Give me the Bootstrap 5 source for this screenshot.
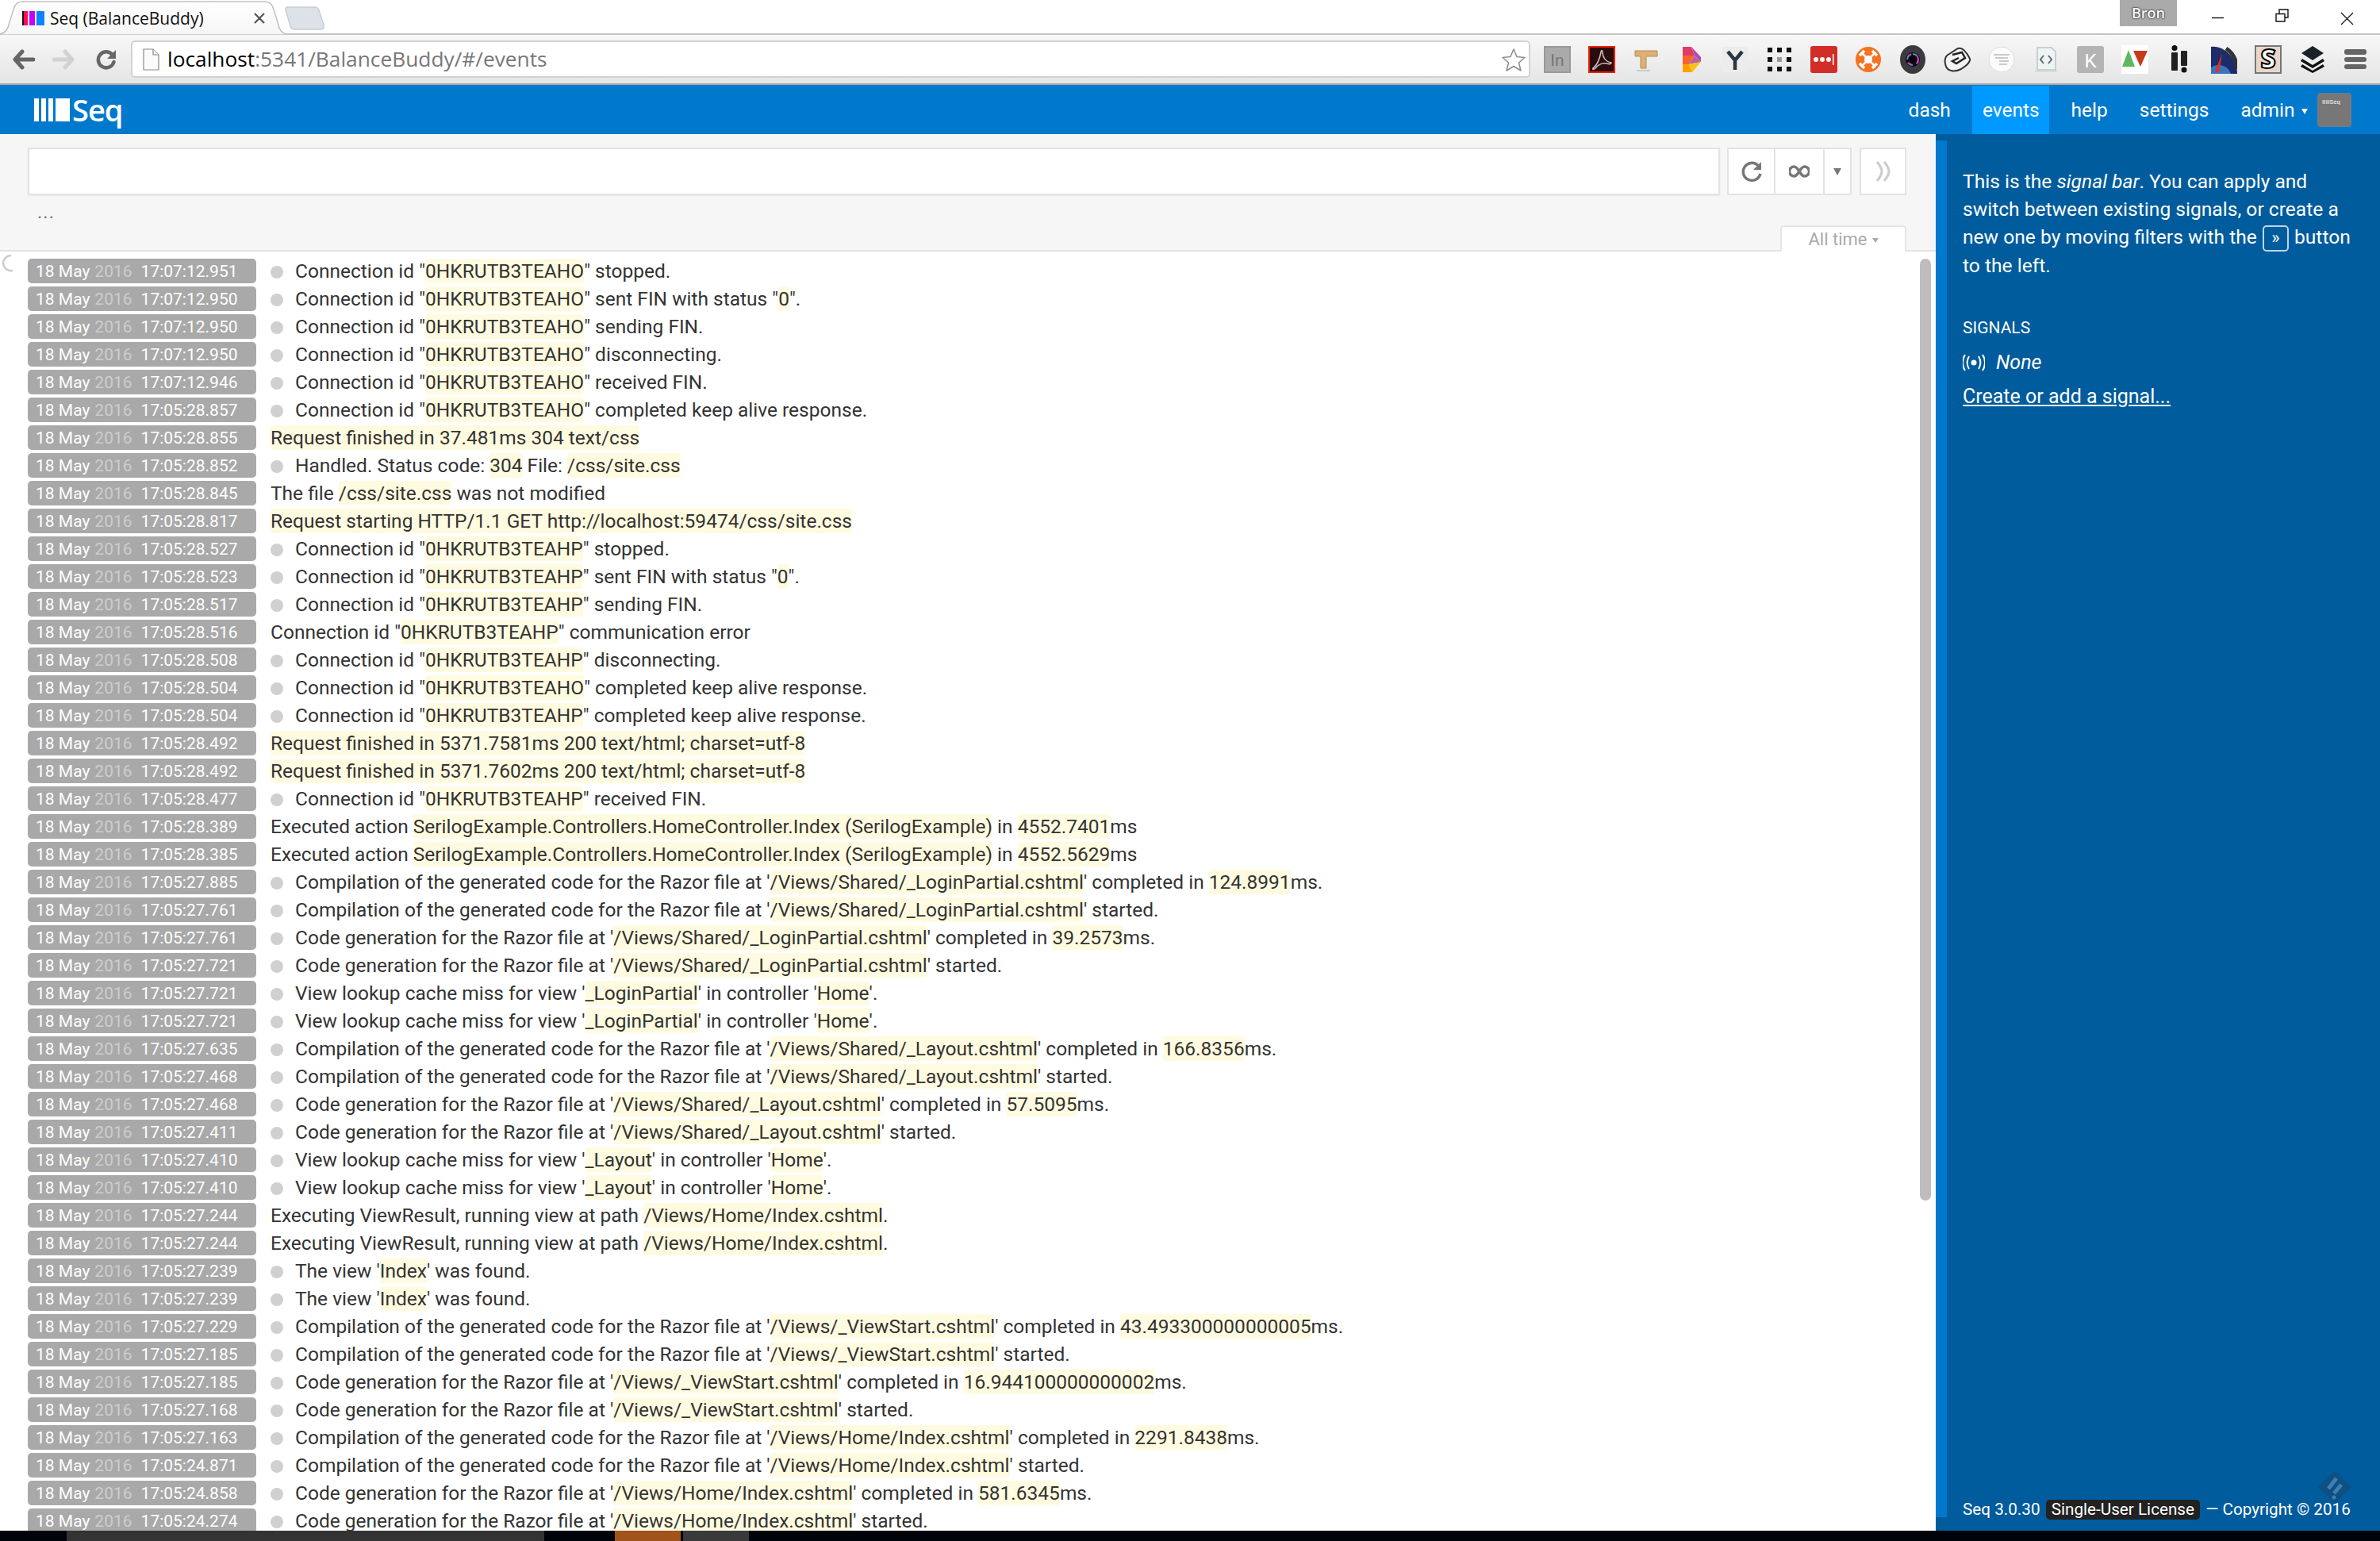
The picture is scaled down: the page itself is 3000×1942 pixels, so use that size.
<!DOCTYPE html>
<html lang="en">
<head>
<meta charset="utf-8">
<title>Seq (BalanceBuddy)</title>
<link href="https://cdn.jsdelivr.net/npm/bootstrap@5.3.0/dist/css/bootstrap.min.css" rel="stylesheet">
<style>
html,body{height:100%;margin:0;overflow:hidden;background:#fff;font-family:Roboto,"Liberation Sans",sans-serif;}
.page-shell{height:1942px;width:3000px;}
/* browser chrome */
.tab-strip{height:44px;background:#fff;flex:none;}
.strip-line{flex:1;height:2px;background:#c4c4c4;align-self:flex-end;}
.win-tab{width:362px;height:44px;position:relative;flex:none;font-family:"Open Sans","Noto Sans",sans-serif;font-size:21px;color:#111;}
.win-tab svg.tabshape{position:absolute;left:0;top:0;}
.tab-fav{position:absolute;left:28px;top:14px;}
.tab-title{position:absolute;left:63px;top:8px;line-height:30px;white-space:nowrap;}
.tab-close{position:absolute;left:320px;top:16px;}
.tab-new{width:56px;height:44px;flex:none;margin-left:-5px;}
.strip-fill{flex:1;display:flex;flex-direction:column;height:44px;}
.strip-top{height:42px;display:flex;justify-content:flex-end;}
.bron{width:72px;height:33px;background:#aaa;color:#fff;font-family:"Open Sans",sans-serif;font-size:18px;font-weight:600;text-align:center;line-height:32px;text-shadow:0 0 2px #222,0 0 2px #222;}
.win-btns{width:256px;padding-left:44px;}
.url-bar{height:63px;background:linear-gradient(#f7f7f7,#e5e5e5);border-bottom:2px solid #aaa;flex:none;padding-left:16px;}
.nav-arrows{width:149px;gap:22px;}
.omni{width:1764px;height:47px;background:#fff;border:2px solid #d2d2d2;border-radius:5px;padding-left:13px;font-family:"Open Sans","Noto Sans",sans-serif;font-size:26.3px;color:#777;}
.omni b{font-weight:400;color:#000;}
.omni-url{margin-left:10px;flex:1;white-space:nowrap;}
.omni-star{margin-right:3px;}
.ext-row{gap:22px;margin-left:17px;}
.ext-row svg{flex:none;display:block;}
/* navbar */
.seq-nav{height:62px;background:#0079cc;flex:none;padding:0 36px 0 43px !important;flex-wrap:nowrap !important;}
.seq-brand{display:flex;align-items:center;gap:2px;color:#fff;padding:0;margin:0;font-family:"Open Sans",sans-serif;font-weight:600;font-size:38px;line-height:62px;letter-spacing:-1px;}
.seq-brand:hover{color:#fff;}
.seq-links{gap:15px;align-items:stretch;}
.seq-links .nav-link{color:#fff;font-size:24.5px;height:61px;line-height:61px;padding:0 12.5px;}
.seq-links .nav-link.active,.seq-links .nav-link.active:hover{color:#fff;background:#0099ff;}
.seq-links .nav-link:hover{color:#fff;}
.admin-caret{display:inline-block;width:0;height:0;border-left:4px solid transparent;border-right:4px solid transparent;border-top:7px solid #fff;margin-left:8px;vertical-align:middle;}
.seq-avatar{width:43px;height:43px;flex:none;background:#777;border:1px solid #6a7e8f;border-radius:4px;color:#ddd;font-size:8px;font-weight:700;line-height:1;padding:7px 0 0 5px;white-space:nowrap;overflow:hidden;}
/* app */
.app-area{height:1760px;flex:none;}
.events-pane{width:2440px;flex:none;position:relative;overflow:hidden;}
.query-head{height:148px;background:#f6f6f6;border-bottom:2px solid #e2e2e2;padding:17px 37px 0 35px;position:relative;flex:none;}
.filter-input{height:60px;width:2133px;border-radius:0;border:2px solid #e3e3e3;background:#fff;box-shadow:0 1px 2px rgba(0,0,0,.06);flex:none;}
.tool-grp{margin-left:9px;height:60px;flex:none;}
.tool-btn{background:#fff;border:2px solid #e3e3e3;border-radius:0 !important;padding:0;display:flex;align-items:center;justify-content:center;height:60px;}
.tool-btn + .tool-btn{margin-left:-2px !important;}
.go-btn{margin-left:10px;width:59px;flex:none;}
.ellip{color:#777;font-size:24px;line-height:1;margin-top:9px;padding-left:12px;letter-spacing:1px;}
.range-tab{position:absolute;left:2244px;top:115px;width:159px;height:33px;background:#fff;border:2px solid #e6e6e6;border-bottom:0;border-radius:5px 5px 0 0;color:#aaa;font-size:22px;text-align:center;line-height:31px;}
.range-tab i{display:inline-block;width:0;height:0;border-left:4px solid transparent;border-right:4px solid transparent;border-top:6px solid #aaa;margin-left:6px;vertical-align:middle;}
.ev-list{padding:7px 0 0 35px;overflow:hidden;flex:1;min-height:0;}
.ev-row{height:35px;flex:none;color:#333;font-size:24.5px;white-space:nowrap;}
.ev-ts{width:288px;height:31px;line-height:33px;flex:none;background:#a9a9a9;border-radius:5px;color:#fff;font-size:21px;padding-left:10px;margin-right:18px;display:flex;}
.ev-yr{color:#cdcdcd;margin-left:6px;}
.ev-tm{margin-left:11px;}
.ev-dot{width:16px;height:16px;border-radius:50%;background:#d0d0d0;flex:none;margin-right:15px;margin-top:3px;}
.ev-msg{height:31px;line-height:31px;display:block;}
.hl{display:inline-block;height:31px;line-height:31px;background:#fffbe0;border-radius:3px;}
.spin-ring{position:absolute;left:-8px;top:151px;}
.scroll-thumb{position:absolute;left:2420px;top:157px;width:14px;height:1187px;border-radius:7px;background:#bdbdbd;}
/* signal bar */
.signal-bar{flex:1;background:#005c9c;color:#fff;position:relative;}
.sig-strip{width:14px;background:#0079cc;margin:8px 0 17px;flex:none;}
.sig-body{padding:42px 36px 14px 20px;flex:1;min-width:0;font-size:25px;line-height:35px;}
.sig-help{margin:0;font-size:24.6px;}
.sig-key{display:inline-block;border:2px solid #bcd6ea;border-radius:5px;line-height:27px;height:33px;width:33px;text-align:center;font-size:22px;vertical-align:middle;margin:0 1px;}
.sig-head{font-size:21px;line-height:30px;margin-top:46px;}
.sig-none{font-style:italic;line-height:30px;margin-top:14px;gap:14px;}
.sig-link{color:#fff;display:block;line-height:35px;margin-top:10px;}
.sig-link:hover{color:#fff;}
.sig-foot{margin-top:auto;font-size:20.7px;white-space:nowrap;line-height:25px;}
.lic-tag{display:inline-block;background:#222;border-radius:5px;padding:0 7px;margin:0 2px;}
.sig-mark{position:absolute;left:481px;top:1685px;}
.task-strip{height:13px;background:#00030a;flex:none;}
.task-a{width:602px;margin-left:84px;background:#333;}
.task-b{width:83px;margin-left:89px;background:#a0541c;}
.task-c{width:83px;margin-left:3px;background:#3a3a3a;}
</style>
</head>
<body>
<div class="page-shell d-flex flex-column">

  <div class="tab-strip d-flex">
    <div class="win-tab">
      <svg class="tabshape" width="362" height="44" viewBox="0 0 362 44"><defs><linearGradient id="tg" x1="0" y1="0" x2="0" y2="1"><stop offset="0" stop-color="#fff"/><stop offset="1" stop-color="#f6f6f6"/></linearGradient></defs><path d="M0 43C8 41 10 36 12 28L17 12C19 5 22 2 30 2H333C340 2 343 5 345 12L350 28C352 38 355 42 362 43V44H0Z" fill="url(#tg)" stroke="#c0c0c0" stroke-width="1.5"/></svg>
      <svg class="tab-fav" width="28" height="18" viewBox="0 0 28 18"><rect width="2" height="18" fill="#111"/><rect x="2" width="5" height="18" fill="#ff0a5c"/><rect x="9" width="7" height="18" fill="#c400ff"/><rect x="18" width="10" height="18" fill="#0a84ff"/></svg>
      <span class="tab-title">Seq (BalanceBuddy)</span>
      <svg class="tab-close" width="14" height="14" viewBox="0 0 14 14"><path d="M1 1L13 13M13 1L1 13" stroke="#555" stroke-width="2.2"/></svg>
    </div>
    <svg class="tab-new" viewBox="0 0 56 44"><path d="M0 44V42H56V44Z" fill="#c4c4c4"/><path d="M5 9H40C43 9 44 10 45 13L51 31C52 35 51 37 47 37H14C11 37 10 36 9 33L3 12C3 10 3 9 5 9Z" fill="#dde1e8" stroke="#c8ccd2" stroke-width="1.5"/></svg>
    <div class="strip-fill">
      <div class="strip-top">
        <div class="bron">Bron</div>
        <div class="win-btns d-flex">
          <svg width="212" height="33" viewBox="0 0 212 33"><path d="M0 22.5H15" stroke="#111" stroke-width="1.4"/><path d="M81 21.5H92V31H81ZM85 21V16H96V26H92" transform="translate(0 -4)" fill="none" stroke="#111" stroke-width="1.4"/><path d="M163 16L178 31M178 16L163 31" stroke="#111" stroke-width="1.2"/></svg>
        </div>
      </div>
      <div class="strip-line w-100"></div>
    </div>
  </div>

  <div class="url-bar d-flex align-items-center">
    <div class="nav-arrows d-flex align-items-center">
      <svg width="28" height="26" viewBox="0 0 28 26"><path d="M12 3L3 13L12 23M3.500 13H26" fill="none" stroke="#666" stroke-width="5" stroke-linecap="round" stroke-linejoin="round"/></svg>
      <svg width="28" height="26" viewBox="0 0 28 26"><path d="M16 3L25 13L16 23M24.500 13H2" fill="none" stroke="#d2d2d2" stroke-width="5" stroke-linecap="round" stroke-linejoin="round"/></svg>
      <svg width="26" height="26" viewBox="0 0 26 26" style="margin-left:5px"><path d="M21 7.500A10 10 0 1 0 22.500 16" fill="none" stroke="#666" stroke-width="4.500" stroke-linecap="round"/><path d="M25 1V12H14Z" fill="#666"/></svg>
    </div>
    <div class="omni d-flex align-items-center">
      <svg width="21" height="28" viewBox="0 0 21 28"><path d="M1 1H13L20 8V27H1Z" fill="#fbfbfb" stroke="#8a8a8a" stroke-width="1.2"/><path d="M13 1V8H20" fill="#eee" stroke="#8a8a8a" stroke-width="1.2"/></svg>
      <span class="omni-url"><b>localhost</b>:5341/BalanceBuddy/#/events</span>
      <svg class="omni-star" width="32" height="32" viewBox="0 0 32 32"><path d="M16 3L20 12.500L30 13.500L22.500 20L25 30L16 24.500L7 30L9.500 20L2 13.500L12 12.500Z" fill="#fff" stroke="#8f8f8f" stroke-width="1.6" stroke-linejoin="round"/></svg>
    </div>
    <div class="ext-row d-flex align-items-center">
      <svg width="34" height="34" viewBox="0 0 34 34"><rect x="1" y="1" width="32" height="32" fill="#aaa" stroke="#999" stroke-width="2"/><text x="17" y="25" font-family="Roboto" font-size="21" fill="#777" text-anchor="middle">In</text></svg>
      <svg width="34" height="34" viewBox="0 0 34 34"><rect x="1" y="1" width="32" height="32" fill="#2a0c0c" stroke="#f01e00" stroke-width="2"/><path d="M6 28C10 25 14 18 16 8C16 5 18 5 18 8C18 14 22 20 29 21C29 23 26 23 23 22C18 21 13 23 9 28C7 30 5 30 6 28Z" fill="none" stroke="#cbb" stroke-width="1.600"/></svg>
      <svg width="34" height="34" viewBox="0 0 34 34"><path d="M3 6H31V13H17V28H10V13H3Z" fill="#deb075" stroke="#b98a4c" stroke-width="1"/><path d="M5 31H22" stroke="#ccc" stroke-width="2"/></svg>
      <svg width="34" height="34" viewBox="0 0 34 34"><path d="M7 1H18L22 12H7Z" fill="#e03c64"/><path d="M18 1L30 14V20L22 12Z" fill="#b04cb0"/><path d="M7 12H22L15 23L7 23Z" fill="#f4642c"/><path d="M22 12L30 20L15 23Z" fill="#b560a8"/><path d="M7 23H15L19 33H7Z" fill="#fca000"/><path d="M15 23L30 20L19 33Z" fill="#fdc010"/></svg>
      <svg width="34" height="34" viewBox="0 0 34 34"><rect x="1" y="1" width="32" height="32" fill="#ececec"/><path d="M8 7L17 18L26 7M17 18V30" fill="none" stroke="#2c3640" stroke-width="4.500"/></svg>
      <svg width="34" height="34" viewBox="0 0 34 34"><g fill="#111"><rect x="2" y="2" width="6" height="6"/><rect x="14" y="2" width="6" height="6"/><rect x="26" y="2" width="6" height="6"/><rect x="2" y="14" width="6" height="6"/><rect x="26" y="14" width="6" height="6"/><rect x="2" y="26" width="6" height="6"/><rect x="14" y="26" width="6" height="6"/><rect x="26" y="26" width="6" height="6"/></g><rect x="14" y="14" width="6" height="6" fill="#999"/></svg>
      <svg width="34" height="34" viewBox="0 0 34 34"><rect width="34" height="34" rx="3" fill="#d32d27"/><g fill="#fff"><circle cx="7" cy="17" r="3"/><circle cx="15" cy="17" r="3"/><circle cx="23" cy="17" r="3"/><rect x="28" y="10" width="1.500" height="14"/></g></svg>
      <svg width="34" height="34" viewBox="0 0 34 34"><circle cx="17" cy="17" r="16" fill="#f47321"/><circle cx="17" cy="17" r="5" fill="#fff"/><path d="M9 9L25 25M25 9L9 25" stroke="#fff" stroke-width="2.500"/><path d="M6 12L12 6M22 6L28 12M6 22L12 28M22 28L28 22" stroke="#fff" stroke-width="3.500"/></svg>
      <svg width="34" height="36" viewBox="0 0 34 36"><ellipse cx="17" cy="18" rx="16" ry="18" fill="#3a3a3f"/><circle cx="17" cy="18" r="9" fill="#0c0c10"/><circle cx="17" cy="18" r="7" fill="none" stroke="#3ac" stroke-width="2" stroke-dasharray="6 5"/><circle cx="17" cy="18" r="7" fill="none" stroke="#e3c" stroke-width="2" stroke-dasharray="5 8"/><circle cx="17" cy="18" r="3" fill="#000"/></svg>
      <svg width="34" height="34" viewBox="0 0 34 34"><path d="M4 12L18 3C24 1 30 10 33 16C34 20 30 24 22 29C14 33 6 32 3 26C1 20 1 15 4 12Z" fill="#f2f2f2" stroke="#333" stroke-width="2"/><path d="M11 11L23 8L27 15L16 22L11 19L19 15" fill="none" stroke="#222" stroke-width="2.500"/></svg>
      <svg width="34" height="34" viewBox="0 0 34 34"><circle cx="17" cy="17" r="16" fill="#fbfbfb" stroke="#ddd"/><path d="M7 11H27M9 15H25M14 19H26M14 23H24" stroke="#bbb" stroke-width="1.500"/></svg>
      <svg width="34" height="34" viewBox="0 0 34 34"><path d="M6 2H24L29 7V30H6Z" fill="#eef4f4" stroke="#b8c6c6" stroke-width="1.500"/><path d="M14 12L10 17L14 22M20 12L24 17L20 22" fill="none" stroke="#667" stroke-width="2"/><path d="M3 32H31" stroke="#ccc"/></svg>
      <svg width="34" height="34" viewBox="0 0 34 34"><rect width="34" height="34" rx="3" fill="#b4b4b4"/><text x="17" y="27" font-family="Roboto" font-size="24" fill="#fff" text-anchor="middle">K</text></svg>
      <svg width="34" height="36" viewBox="0 0 34 36"><rect width="34" height="36" fill="#fff"/><path d="M1 27L9 6L17 27Z" fill="#5cb85c"/><path d="M15 7H33L24 27Z" fill="#c93a1a"/></svg>
      <svg width="34" height="36" viewBox="0 0 34 36"><circle cx="11" cy="3.500" r="3.500" fill="#111"/><rect x="7" y="9" width="8" height="23" rx="1" fill="#222"/><rect x="19" y="7" width="8" height="19" rx="1" fill="#222"/><circle cx="23" cy="31" r="3.500" fill="#111"/></svg>
      <svg width="34" height="36" viewBox="0 0 34 36"><path d="M1 36V2C16 0 34 14 34 36Z" fill="#1e2c6a"/><path d="M1 36V28C10 22 22 25 26 36Z" fill="#3a74c0"/><path d="M20 4C28 9 33 18 34 30" stroke="#333" stroke-width="5" fill="none"/><path d="M6 34L15 10L11 34Z" fill="#e0341c"/></svg>
      <svg width="34" height="36" viewBox="0 0 34 36"><rect x="1" y="1" width="32" height="34" fill="#e8d6cc" stroke="#777" stroke-width="2"/><text x="17" y="29" font-family="Open Sans" font-weight="800" font-size="33" fill="#fff" stroke="#000" stroke-width="2" text-anchor="middle">S</text></svg>
      <svg width="34" height="34" viewBox="0 0 34 34"><path d="M17 0L31 9L17 18L3 9Z" fill="#1b2126"/><path d="M4 16L17 24L30 16L32 19L17 28L2 19Z" fill="#111"/><path d="M4 23L17 31L30 23L32 26L17 34L2 26Z" fill="#111"/></svg>
      <svg width="30" height="30" viewBox="0 0 30 30"><rect x="1" y="2" width="28" height="7" rx="3" fill="#666"/><rect x="1" y="12" width="28" height="6" rx="3" fill="#666"/><rect x="1" y="21" width="28" height="6" rx="3" fill="#666"/></svg>
    </div>
  </div>

  <nav class="navbar seq-nav justify-content-between">
    <a class="navbar-brand seq-brand" href="#">
      <svg width="46" height="29" viewBox="0 0 46 29"><g fill="#fff"><rect width="6" height="29"/><rect x="9" width="6" height="29"/><rect x="18" width="6" height="29"/><rect x="27" width="18" height="29"/></g></svg>
      <span>Seq</span>
    </a>
    <div class="d-flex align-items-center">
      <ul class="navbar-nav flex-row seq-links">
        <li class="nav-item"><a class="nav-link" href="#">dash</a></li>
        <li class="nav-item"><a class="nav-link active" href="#">events</a></li>
        <li class="nav-item"><a class="nav-link" href="#">help</a></li>
        <li class="nav-item"><a class="nav-link" href="#">settings</a></li>
        <li class="nav-item"><a class="nav-link" href="#">admin<span class="admin-caret"></span></a></li>
      </ul>
      <div class="seq-avatar">IIIISeq</div>
    </div>
  </nav>

  <div class="app-area d-flex">
    <section class="events-pane d-flex flex-column">
      <div class="query-head">
        <div class="d-flex">
          <input class="form-control filter-input" type="text" aria-label="Filter">
          <div class="btn-group tool-grp">
            <button class="btn tool-btn" style="width:61px" type="button"><svg width="26" height="28" viewBox="0 0 26 28"><path d="M21 6.500A11 11 0 1 0 24 17" fill="none" stroke="#777" stroke-width="3.500"/><path d="M25 2V12H15Z" fill="#777"/></svg></button>
            <button class="btn tool-btn" style="width:64px" type="button"><svg width="26" height="16" viewBox="0 0 26 16"><path d="M13 8C10 3 8 2 6.500 2A6 6 0 0 0 6.500 14C8 14 10 13 13 8C16 3 18 2 19.500 2A6 6 0 0 1 19.500 14C18 14 16 13 13 8Z" fill="none" stroke="#777" stroke-width="3.500"/></svg></button>
            <button class="btn tool-btn" style="width:36px" type="button"><svg width="12" height="10" viewBox="0 0 12 10"><path d="M1 1H11L6 10Z" fill="#777"/></svg></button>
          </div>
          <button class="btn tool-btn go-btn" type="button"><svg width="20" height="26" viewBox="0 0 20 26"><path d="M2 1C7 7 8 10 8 13C8 16 7 19 2 25M11 1C16 7 17 10 17 13C17 16 16 19 11 25" fill="none" stroke="#ccc" stroke-width="3.200"/></svg></button>
        </div>
        <div class="ellip">...</div>
        <div class="range-tab">All time<i></i></div>
      </div>
      <div class="ev-list">
        <div class="ev-row d-flex align-items-center"><span class="ev-ts"><span>18 May</span><span class="ev-yr">2016</span><span class="ev-tm">17:07:12.951</span></span><span class="ev-dot"></span><span class="ev-msg">Connection id "<span class="hl">0HKRUTB3TEAHO</span>" stopped.</span></div>
        <div class="ev-row d-flex align-items-center"><span class="ev-ts"><span>18 May</span><span class="ev-yr">2016</span><span class="ev-tm">17:07:12.950</span></span><span class="ev-dot"></span><span class="ev-msg">Connection id "<span class="hl">0HKRUTB3TEAHO</span>" sent FIN with status "<span class="hl">0</span>".</span></div>
        <div class="ev-row d-flex align-items-center"><span class="ev-ts"><span>18 May</span><span class="ev-yr">2016</span><span class="ev-tm">17:07:12.950</span></span><span class="ev-dot"></span><span class="ev-msg">Connection id "<span class="hl">0HKRUTB3TEAHO</span>" sending FIN.</span></div>
        <div class="ev-row d-flex align-items-center"><span class="ev-ts"><span>18 May</span><span class="ev-yr">2016</span><span class="ev-tm">17:07:12.950</span></span><span class="ev-dot"></span><span class="ev-msg">Connection id "<span class="hl">0HKRUTB3TEAHO</span>" disconnecting.</span></div>
        <div class="ev-row d-flex align-items-center"><span class="ev-ts"><span>18 May</span><span class="ev-yr">2016</span><span class="ev-tm">17:07:12.946</span></span><span class="ev-dot"></span><span class="ev-msg">Connection id "<span class="hl">0HKRUTB3TEAHO</span>" received FIN.</span></div>
        <div class="ev-row d-flex align-items-center"><span class="ev-ts"><span>18 May</span><span class="ev-yr">2016</span><span class="ev-tm">17:05:28.857</span></span><span class="ev-dot"></span><span class="ev-msg">Connection id "<span class="hl">0HKRUTB3TEAHO</span>" completed keep alive response.</span></div>
        <div class="ev-row d-flex align-items-center"><span class="ev-ts"><span>18 May</span><span class="ev-yr">2016</span><span class="ev-tm">17:05:28.855</span></span><span class="ev-msg"><span class="hl">Request finished in 37.481ms 304 text/css</span></span></div>
        <div class="ev-row d-flex align-items-center"><span class="ev-ts"><span>18 May</span><span class="ev-yr">2016</span><span class="ev-tm">17:05:28.852</span></span><span class="ev-dot"></span><span class="ev-msg">Handled. Status code: <span class="hl">304</span> File: <span class="hl">/css/site.css</span></span></div>
        <div class="ev-row d-flex align-items-center"><span class="ev-ts"><span>18 May</span><span class="ev-yr">2016</span><span class="ev-tm">17:05:28.845</span></span><span class="ev-msg">The file <span class="hl">/css/site.css</span> was not modified</span></div>
        <div class="ev-row d-flex align-items-center"><span class="ev-ts"><span>18 May</span><span class="ev-yr">2016</span><span class="ev-tm">17:05:28.817</span></span><span class="ev-msg"><span class="hl">Request starting HTTP/1.1 GET http://localhost:59474/css/site.css</span></span></div>
        <div class="ev-row d-flex align-items-center"><span class="ev-ts"><span>18 May</span><span class="ev-yr">2016</span><span class="ev-tm">17:05:28.527</span></span><span class="ev-dot"></span><span class="ev-msg">Connection id "<span class="hl">0HKRUTB3TEAHP</span>" stopped.</span></div>
        <div class="ev-row d-flex align-items-center"><span class="ev-ts"><span>18 May</span><span class="ev-yr">2016</span><span class="ev-tm">17:05:28.523</span></span><span class="ev-dot"></span><span class="ev-msg">Connection id "<span class="hl">0HKRUTB3TEAHP</span>" sent FIN with status "<span class="hl">0</span>".</span></div>
        <div class="ev-row d-flex align-items-center"><span class="ev-ts"><span>18 May</span><span class="ev-yr">2016</span><span class="ev-tm">17:05:28.517</span></span><span class="ev-dot"></span><span class="ev-msg">Connection id "<span class="hl">0HKRUTB3TEAHP</span>" sending FIN.</span></div>
        <div class="ev-row d-flex align-items-center"><span class="ev-ts"><span>18 May</span><span class="ev-yr">2016</span><span class="ev-tm">17:05:28.516</span></span><span class="ev-msg">Connection id "<span class="hl">0HKRUTB3TEAHP</span>" communication error</span></div>
        <div class="ev-row d-flex align-items-center"><span class="ev-ts"><span>18 May</span><span class="ev-yr">2016</span><span class="ev-tm">17:05:28.508</span></span><span class="ev-dot"></span><span class="ev-msg">Connection id "<span class="hl">0HKRUTB3TEAHP</span>" disconnecting.</span></div>
        <div class="ev-row d-flex align-items-center"><span class="ev-ts"><span>18 May</span><span class="ev-yr">2016</span><span class="ev-tm">17:05:28.504</span></span><span class="ev-dot"></span><span class="ev-msg">Connection id "<span class="hl">0HKRUTB3TEAHO</span>" completed keep alive response.</span></div>
        <div class="ev-row d-flex align-items-center"><span class="ev-ts"><span>18 May</span><span class="ev-yr">2016</span><span class="ev-tm">17:05:28.504</span></span><span class="ev-dot"></span><span class="ev-msg">Connection id "<span class="hl">0HKRUTB3TEAHP</span>" completed keep alive response.</span></div>
        <div class="ev-row d-flex align-items-center"><span class="ev-ts"><span>18 May</span><span class="ev-yr">2016</span><span class="ev-tm">17:05:28.492</span></span><span class="ev-msg"><span class="hl">Request finished in 5371.7581ms 200 text/html; charset=utf-8</span></span></div>
        <div class="ev-row d-flex align-items-center"><span class="ev-ts"><span>18 May</span><span class="ev-yr">2016</span><span class="ev-tm">17:05:28.492</span></span><span class="ev-msg"><span class="hl">Request finished in 5371.7602ms 200 text/html; charset=utf-8</span></span></div>
        <div class="ev-row d-flex align-items-center"><span class="ev-ts"><span>18 May</span><span class="ev-yr">2016</span><span class="ev-tm">17:05:28.477</span></span><span class="ev-dot"></span><span class="ev-msg">Connection id "<span class="hl">0HKRUTB3TEAHP</span>" received FIN.</span></div>
        <div class="ev-row d-flex align-items-center"><span class="ev-ts"><span>18 May</span><span class="ev-yr">2016</span><span class="ev-tm">17:05:28.389</span></span><span class="ev-msg">Executed action <span class="hl">SerilogExample.Controllers.HomeController.Index (SerilogExample)</span> in <span class="hl">4552.7401</span>ms</span></div>
        <div class="ev-row d-flex align-items-center"><span class="ev-ts"><span>18 May</span><span class="ev-yr">2016</span><span class="ev-tm">17:05:28.385</span></span><span class="ev-msg">Executed action <span class="hl">SerilogExample.Controllers.HomeController.Index (SerilogExample)</span> in <span class="hl">4552.5629</span>ms</span></div>
        <div class="ev-row d-flex align-items-center"><span class="ev-ts"><span>18 May</span><span class="ev-yr">2016</span><span class="ev-tm">17:05:27.885</span></span><span class="ev-dot"></span><span class="ev-msg">Compilation of the generated code for the Razor file at '<span class="hl">/Views/Shared/_LoginPartial.cshtml</span>' completed in <span class="hl">124.8991</span>ms.</span></div>
        <div class="ev-row d-flex align-items-center"><span class="ev-ts"><span>18 May</span><span class="ev-yr">2016</span><span class="ev-tm">17:05:27.761</span></span><span class="ev-dot"></span><span class="ev-msg">Compilation of the generated code for the Razor file at '<span class="hl">/Views/Shared/_LoginPartial.cshtml</span>' started.</span></div>
        <div class="ev-row d-flex align-items-center"><span class="ev-ts"><span>18 May</span><span class="ev-yr">2016</span><span class="ev-tm">17:05:27.761</span></span><span class="ev-dot"></span><span class="ev-msg">Code generation for the Razor file at '<span class="hl">/Views/Shared/_LoginPartial.cshtml</span>' completed in <span class="hl">39.2573</span>ms.</span></div>
        <div class="ev-row d-flex align-items-center"><span class="ev-ts"><span>18 May</span><span class="ev-yr">2016</span><span class="ev-tm">17:05:27.721</span></span><span class="ev-dot"></span><span class="ev-msg">Code generation for the Razor file at '<span class="hl">/Views/Shared/_LoginPartial.cshtml</span>' started.</span></div>
        <div class="ev-row d-flex align-items-center"><span class="ev-ts"><span>18 May</span><span class="ev-yr">2016</span><span class="ev-tm">17:05:27.721</span></span><span class="ev-dot"></span><span class="ev-msg">View lookup cache miss for view '<span class="hl">_LoginPartial</span>' in controller '<span class="hl">Home</span>'.</span></div>
        <div class="ev-row d-flex align-items-center"><span class="ev-ts"><span>18 May</span><span class="ev-yr">2016</span><span class="ev-tm">17:05:27.721</span></span><span class="ev-dot"></span><span class="ev-msg">View lookup cache miss for view '<span class="hl">_LoginPartial</span>' in controller '<span class="hl">Home</span>'.</span></div>
        <div class="ev-row d-flex align-items-center"><span class="ev-ts"><span>18 May</span><span class="ev-yr">2016</span><span class="ev-tm">17:05:27.635</span></span><span class="ev-dot"></span><span class="ev-msg">Compilation of the generated code for the Razor file at '<span class="hl">/Views/Shared/_Layout.cshtml</span>' completed in <span class="hl">166.8356</span>ms.</span></div>
        <div class="ev-row d-flex align-items-center"><span class="ev-ts"><span>18 May</span><span class="ev-yr">2016</span><span class="ev-tm">17:05:27.468</span></span><span class="ev-dot"></span><span class="ev-msg">Compilation of the generated code for the Razor file at '<span class="hl">/Views/Shared/_Layout.cshtml</span>' started.</span></div>
        <div class="ev-row d-flex align-items-center"><span class="ev-ts"><span>18 May</span><span class="ev-yr">2016</span><span class="ev-tm">17:05:27.468</span></span><span class="ev-dot"></span><span class="ev-msg">Code generation for the Razor file at '<span class="hl">/Views/Shared/_Layout.cshtml</span>' completed in <span class="hl">57.5095</span>ms.</span></div>
        <div class="ev-row d-flex align-items-center"><span class="ev-ts"><span>18 May</span><span class="ev-yr">2016</span><span class="ev-tm">17:05:27.411</span></span><span class="ev-dot"></span><span class="ev-msg">Code generation for the Razor file at '<span class="hl">/Views/Shared/_Layout.cshtml</span>' started.</span></div>
        <div class="ev-row d-flex align-items-center"><span class="ev-ts"><span>18 May</span><span class="ev-yr">2016</span><span class="ev-tm">17:05:27.410</span></span><span class="ev-dot"></span><span class="ev-msg">View lookup cache miss for view '<span class="hl">_Layout</span>' in controller '<span class="hl">Home</span>'.</span></div>
        <div class="ev-row d-flex align-items-center"><span class="ev-ts"><span>18 May</span><span class="ev-yr">2016</span><span class="ev-tm">17:05:27.410</span></span><span class="ev-dot"></span><span class="ev-msg">View lookup cache miss for view '<span class="hl">_Layout</span>' in controller '<span class="hl">Home</span>'.</span></div>
        <div class="ev-row d-flex align-items-center"><span class="ev-ts"><span>18 May</span><span class="ev-yr">2016</span><span class="ev-tm">17:05:27.244</span></span><span class="ev-msg">Executing ViewResult, running view at path <span class="hl">/Views/Home/Index.cshtml</span>.</span></div>
        <div class="ev-row d-flex align-items-center"><span class="ev-ts"><span>18 May</span><span class="ev-yr">2016</span><span class="ev-tm">17:05:27.244</span></span><span class="ev-msg">Executing ViewResult, running view at path <span class="hl">/Views/Home/Index.cshtml</span>.</span></div>
        <div class="ev-row d-flex align-items-center"><span class="ev-ts"><span>18 May</span><span class="ev-yr">2016</span><span class="ev-tm">17:05:27.239</span></span><span class="ev-dot"></span><span class="ev-msg">The view '<span class="hl">Index</span>' was found.</span></div>
        <div class="ev-row d-flex align-items-center"><span class="ev-ts"><span>18 May</span><span class="ev-yr">2016</span><span class="ev-tm">17:05:27.239</span></span><span class="ev-dot"></span><span class="ev-msg">The view '<span class="hl">Index</span>' was found.</span></div>
        <div class="ev-row d-flex align-items-center"><span class="ev-ts"><span>18 May</span><span class="ev-yr">2016</span><span class="ev-tm">17:05:27.229</span></span><span class="ev-dot"></span><span class="ev-msg">Compilation of the generated code for the Razor file at '<span class="hl">/Views/_ViewStart.cshtml</span>' completed in <span class="hl">43.493300000000005</span>ms.</span></div>
        <div class="ev-row d-flex align-items-center"><span class="ev-ts"><span>18 May</span><span class="ev-yr">2016</span><span class="ev-tm">17:05:27.185</span></span><span class="ev-dot"></span><span class="ev-msg">Compilation of the generated code for the Razor file at '<span class="hl">/Views/_ViewStart.cshtml</span>' started.</span></div>
        <div class="ev-row d-flex align-items-center"><span class="ev-ts"><span>18 May</span><span class="ev-yr">2016</span><span class="ev-tm">17:05:27.185</span></span><span class="ev-dot"></span><span class="ev-msg">Code generation for the Razor file at '<span class="hl">/Views/_ViewStart.cshtml</span>' completed in <span class="hl">16.944100000000002</span>ms.</span></div>
        <div class="ev-row d-flex align-items-center"><span class="ev-ts"><span>18 May</span><span class="ev-yr">2016</span><span class="ev-tm">17:05:27.168</span></span><span class="ev-dot"></span><span class="ev-msg">Code generation for the Razor file at '<span class="hl">/Views/_ViewStart.cshtml</span>' started.</span></div>
        <div class="ev-row d-flex align-items-center"><span class="ev-ts"><span>18 May</span><span class="ev-yr">2016</span><span class="ev-tm">17:05:27.163</span></span><span class="ev-dot"></span><span class="ev-msg">Compilation of the generated code for the Razor file at '<span class="hl">/Views/Home/Index.cshtml</span>' completed in <span class="hl">2291.8438</span>ms.</span></div>
        <div class="ev-row d-flex align-items-center"><span class="ev-ts"><span>18 May</span><span class="ev-yr">2016</span><span class="ev-tm">17:05:24.871</span></span><span class="ev-dot"></span><span class="ev-msg">Compilation of the generated code for the Razor file at '<span class="hl">/Views/Home/Index.cshtml</span>' started.</span></div>
        <div class="ev-row d-flex align-items-center"><span class="ev-ts"><span>18 May</span><span class="ev-yr">2016</span><span class="ev-tm">17:05:24.858</span></span><span class="ev-dot"></span><span class="ev-msg">Code generation for the Razor file at '<span class="hl">/Views/Home/Index.cshtml</span>' completed in <span class="hl">581.6345</span>ms.</span></div>
        <div class="ev-row d-flex align-items-center"><span class="ev-ts"><span>18 May</span><span class="ev-yr">2016</span><span class="ev-tm">17:05:24.274</span></span><span class="ev-dot"></span><span class="ev-msg">Code generation for the Razor file at '<span class="hl">/Views/Home/Index.cshtml</span>' started.</span></div>
      </div>
      <svg class="spin-ring" width="26" height="24" viewBox="0 0 26 24"><path d="M22 2A10 10 0 0 0 12 12A10 10 0 0 0 24 21" fill="none" stroke="#ccc" stroke-width="2.500"/></svg>
      <div class="scroll-thumb"></div>
    </section>

    <aside class="signal-bar d-flex">
      <div class="sig-strip"></div>
      <div class="sig-body d-flex flex-column">
        <p class="sig-help">This is the <em>signal bar</em>. You can apply and switch between existing signals, or create a new one by moving filters with the <span class="sig-key">»</span> button to the left.</p>
        <div class="sig-head">SIGNALS</div>
        <div class="sig-none d-flex align-items-center">
          <svg width="28" height="22" viewBox="0 0 28 22"><circle cx="14" cy="11" r="3.500" fill="#fff"/><path d="M8 3C5 8 5 14 8 19M20 3C23 8 23 14 20 19M3 1C-1 7 -1 15 3 21M25 1C29 7 29 15 25 21" fill="none" stroke="#fff" stroke-width="2"/></svg>
          <span>None</span>
        </div>
        <a class="sig-link" href="#">Create or add a signal...</a>
        <div class="sig-foot">Seq 3.0.30 <span class="lic-tag">Single-User License</span> — Copyright © 2016</div>
      </div>
      <svg class="sig-mark" width="44" height="40" viewBox="0 0 44 40"><path d="M22 0L43 20L22 40L1 20Z" fill="#0f4f82"/><path d="M24 9L14 22M30 17L21 28" stroke="#3d7fb0" stroke-width="5"/><circle cx="21" cy="33" r="2.500" fill="#3d7fb0"/></svg>
    </aside>
  </div>

  <div class="task-strip d-flex">
    <div class="task-a"></div>
    <div class="task-b"></div>
    <div class="task-c"></div>
  </div>
</div>
<script src="https://cdn.jsdelivr.net/npm/bootstrap@5.3.0/dist/js/bootstrap.bundle.min.js"></script>
</body>
</html>
